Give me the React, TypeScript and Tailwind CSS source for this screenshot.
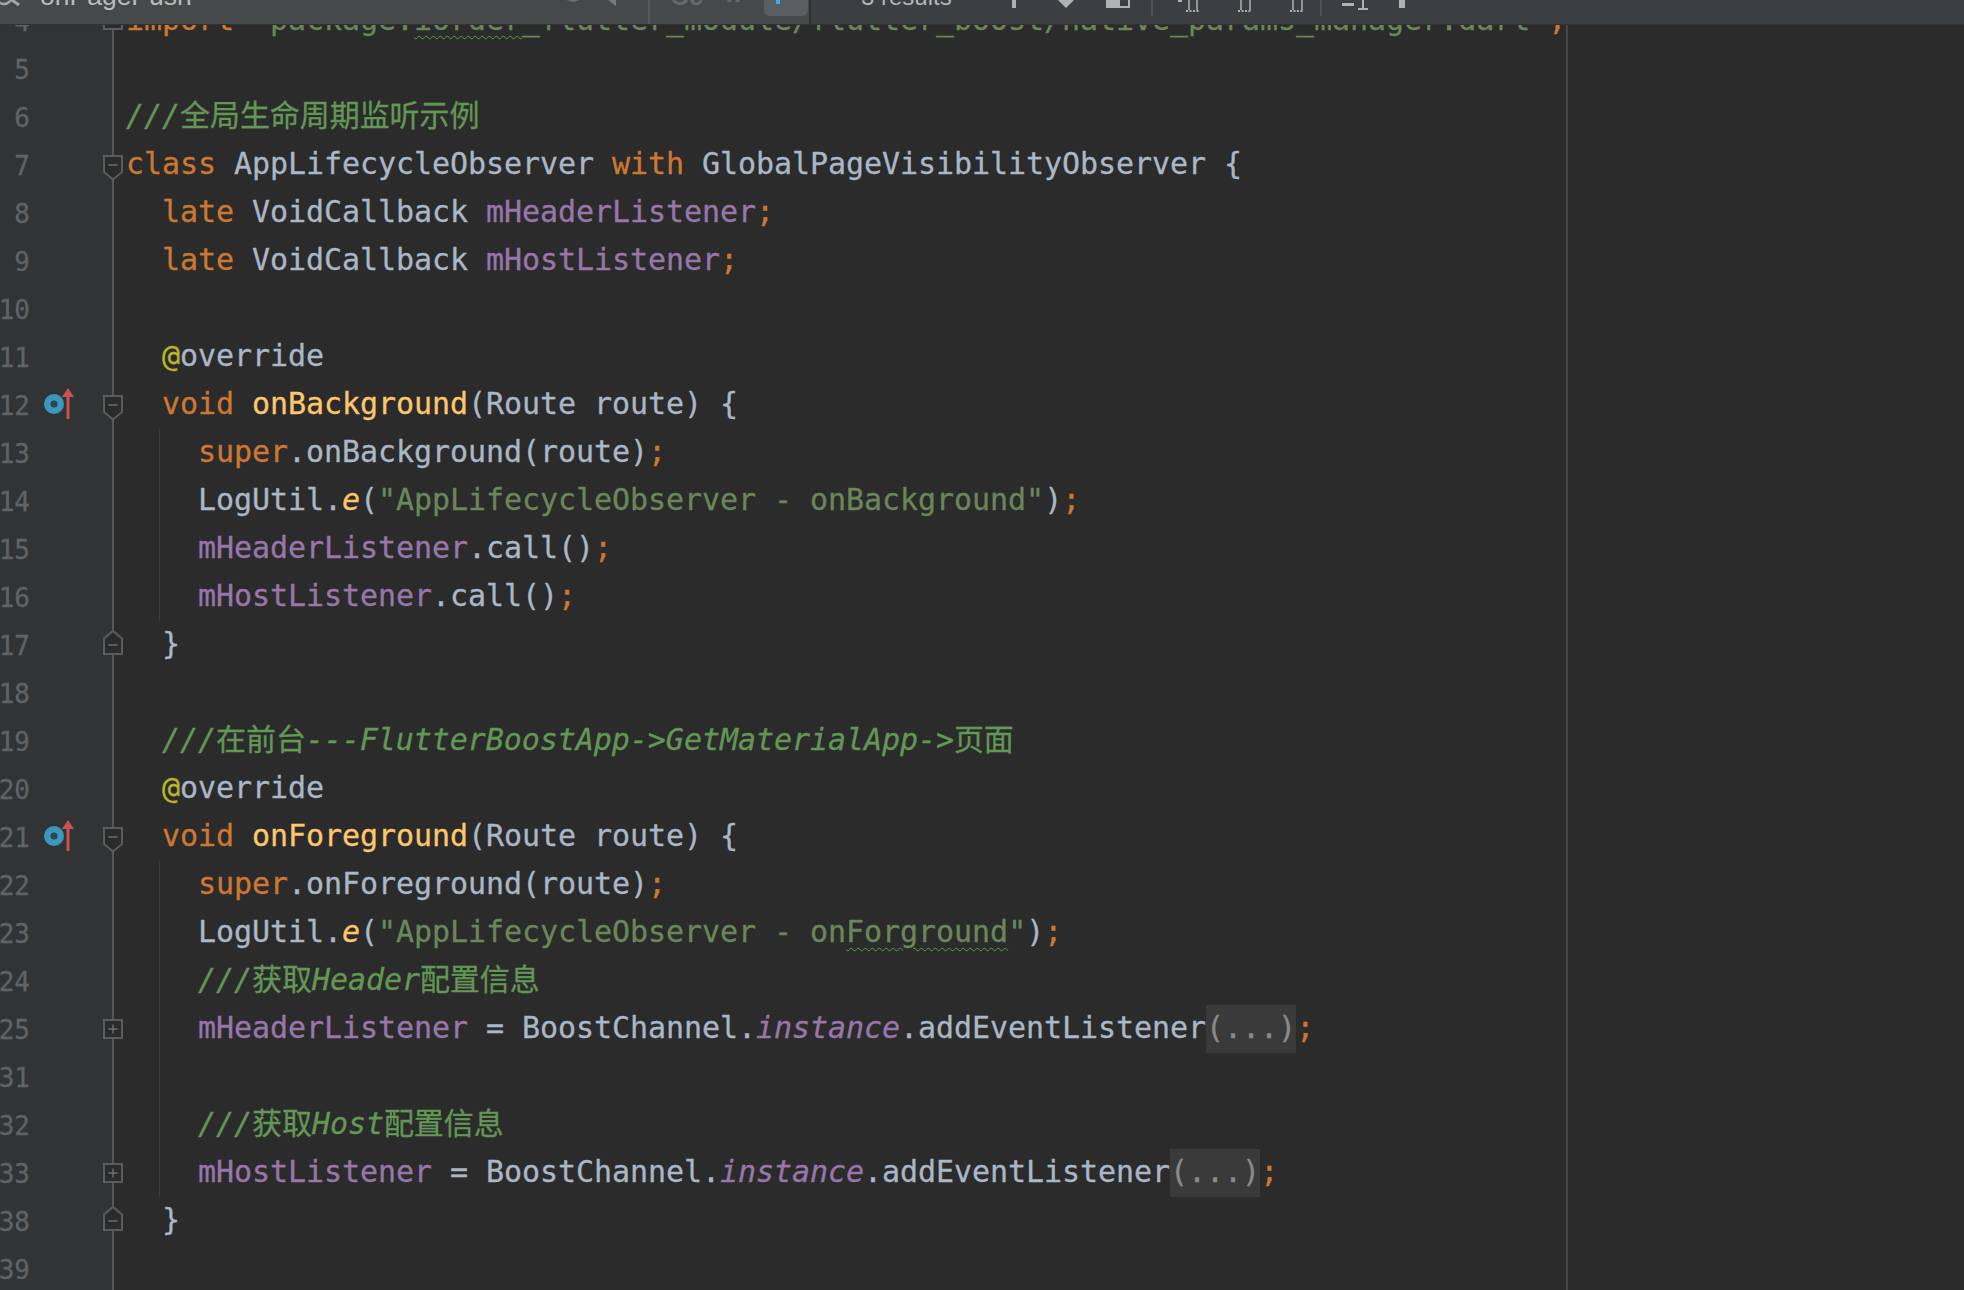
import React from 'react';

type Tok = 'k' | 't' | 'p' | 'pi' | 's' | 'c' | 'ci' | 'm' | 'mi' | 'a' | 'w' | 'f';
type Part = [Tok, string];

interface Line {
  n: number;
  parts?: Part[];
  icon?: boolean;
  fold?: 'open' | 'close' | 'plus' | 'flat';
  guide?: boolean;
}

const tokClass: Record<Tok, string> = {
  k: 'text-[#cc7832]',
  t: 'text-[#a9b7c6]',
  p: 'text-[#9876aa]',
  pi: 'text-[#9876aa] italic',
  s: 'text-[#6a8759]',
  c: 'text-[#629755]',
  ci: 'text-[#629755] italic',
  m: 'text-[#ffc66d]',
  mi: 'text-[#ffc66d] italic',
  a: 'text-[#bbb529]',
  w: 'text-[#6a8759] underline decoration-wavy decoration-[#629755] decoration-1 underline-offset-[5px]',
  f: 'inline-block h-[48px] bg-[#3a3a3a] text-[#8a8a8a]',
};

const lines: Line[] = [
  {
    n: 4,
    fold: 'flat',
    parts: [
      ['k', 'import '],
      ['s', "'package:"],
      ['w', 'iorder'],
      ['s', "_flutter_module/flutter_boost/native_params_manager.dart'"],
      ['k', ';'],
    ],
  },
  { n: 5 },
  { n: 6, parts: [['ci', '///'], ['c', '全局生命周期监听示例']] },
  {
    n: 7,
    fold: 'open',
    parts: [
      ['k', 'class '],
      ['t', 'AppLifecycleObserver '],
      ['k', 'with '],
      ['t', 'GlobalPageVisibilityObserver {'],
    ],
  },
  { n: 8, parts: [['k', '  late '], ['t', 'VoidCallback '], ['p', 'mHeaderListener'], ['k', ';']] },
  { n: 9, parts: [['k', '  late '], ['t', 'VoidCallback '], ['p', 'mHostListener'], ['k', ';']] },
  { n: 10 },
  { n: 11, parts: [['a', '  @'], ['t', 'override']] },
  {
    n: 12,
    icon: true,
    fold: 'open',
    parts: [['k', '  void '], ['m', 'onBackground'], ['t', '(Route route) {']],
  },
  { n: 13, guide: true, parts: [['k', '    super'], ['t', '.onBackground(route)'], ['k', ';']] },
  {
    n: 14,
    guide: true,
    parts: [
      ['t', '    LogUtil.'],
      ['mi', 'e'],
      ['t', '('],
      ['s', '"AppLifecycleObserver - onBackground"'],
      ['t', ')'],
      ['k', ';'],
    ],
  },
  { n: 15, guide: true, parts: [['p', '    mHeaderListener'], ['t', '.call()'], ['k', ';']] },
  { n: 16, guide: true, parts: [['p', '    mHostListener'], ['t', '.call()'], ['k', ';']] },
  { n: 17, fold: 'close', parts: [['t', '  }']] },
  { n: 18 },
  {
    n: 19,
    parts: [['ci', '  ///'], ['c', '在前台'], ['ci', '---FlutterBoostApp->GetMaterialApp->'], ['c', '页面']],
  },
  { n: 20, parts: [['a', '  @'], ['t', 'override']] },
  {
    n: 21,
    icon: true,
    fold: 'open',
    parts: [['k', '  void '], ['m', 'onForeground'], ['t', '(Route route) {']],
  },
  { n: 22, guide: true, parts: [['k', '    super'], ['t', '.onForeground(route)'], ['k', ';']] },
  {
    n: 23,
    guide: true,
    parts: [
      ['t', '    LogUtil.'],
      ['mi', 'e'],
      ['t', '('],
      ['s', '"AppLifecycleObserver - on'],
      ['w', 'Forground'],
      ['s', '"'],
      ['t', ')'],
      ['k', ';'],
    ],
  },
  { n: 24, guide: true, parts: [['ci', '    ///'], ['c', '获取'], ['ci', 'Header'], ['c', '配置信息']] },
  {
    n: 25,
    guide: true,
    fold: 'plus',
    parts: [
      ['p', '    mHeaderListener '],
      ['t', '= BoostChannel.'],
      ['pi', 'instance'],
      ['t', '.addEventListener'],
      ['f', '(...)'],
      ['k', ';'],
    ],
  },
  { n: 31, guide: true },
  { n: 32, guide: true, parts: [['ci', '    ///'], ['c', '获取'], ['ci', 'Host'], ['c', '配置信息']] },
  {
    n: 33,
    guide: true,
    fold: 'plus',
    parts: [
      ['p', '    mHostListener '],
      ['t', '= BoostChannel.'],
      ['pi', 'instance'],
      ['t', '.addEventListener'],
      ['f', '(...)'],
      ['k', ';'],
    ],
  },
  { n: 38, fold: 'close', parts: [['t', '  }']] },
  { n: 39 },
];

const FoldMarker = ({ kind }: { kind: NonNullable<Line['fold']> }) => {
  const stroke = '#5a5c5e';
  if (kind === 'plus' || kind === 'flat') {
    return (
      <svg
        className={`absolute left-[103px] ${kind === 'flat' ? 'top-[13px]' : 'top-[14px]'}`}
        width="20"
        height="20"
        viewBox="0 0 20 20"
      >
        <rect x="1" y="1" width="18" height="18" fill="#2b2b2b" stroke={stroke} strokeWidth="2" />
        <path d={kind === 'plus' ? 'M5.500 10h9M10 5.500v9' : 'M5.500 10h9'} stroke="#6a6c6e" strokeWidth="1.500" />
      </svg>
    );
  }
  if (kind === 'open') {
    return (
      <svg className="absolute left-[103px] top-[14px]" width="20" height="26" viewBox="0 0 20 26">
        <path d="M1 1h18v16l-9 7.500L1 17z" fill="#2b2b2b" stroke={stroke} strokeWidth="2" />
        <path d="M5.500 10h9" stroke="#6a6c6e" strokeWidth="1.500" />
      </svg>
    );
  }
  return (
    <svg className="absolute left-[103px] top-[9px]" width="20" height="25" viewBox="0 0 20 25">
      <path d="M1 24h18V8.500L10 1 1 8.500z" fill="#2b2b2b" stroke={stroke} strokeWidth="2" />
      <path d="M5.500 15h9" stroke="#6a6c6e" strokeWidth="1.500" />
    </svg>
  );
};

const OverrideIcon = () => (
  <svg className="absolute left-[44px] top-[6px]" width="30" height="32" viewBox="0 0 30 32">
    <circle cx="10" cy="17" r="10" fill="#3b97bd" />
    <circle cx="10" cy="17" r="3.600" fill="#2b2b2b" fillOpacity="0.75" />
    <path d="M24 32V8" stroke="#c75450" strokeWidth="3" />
    <path d="M18 10L24 1l6 9z" fill="#c75450" />
  </svg>
);

const Row = ({ line }: { line: Line }) => (
  <div className="relative flex h-[48px] shrink-0">
    <div className="flex w-[114px] shrink-0 border-r-2 border-[#555759] bg-[#313335]">
      <div className="flex w-[30px] justify-end overflow-hidden text-[26px] leading-[50px] text-[#606366] [-webkit-text-stroke:0.3px_#606366]">
        <span className="shrink-0">{line.n}</span>
      </div>
    </div>
    {line.icon && <OverrideIcon />}
    {line.fold && <FoldMarker kind={line.fold} />}
    <div className="relative h-full w-[1454px] shrink-0 border-r-2 border-[#444648] pl-[12px]">
      {line.guide && <div className="absolute left-[45px] top-0 h-full w-px bg-[#3b3b3b]" />}
      <div className="whitespace-pre text-[30px] leading-[46px] tracking-[-0.06px] [-webkit-text-stroke:0.3px]">
        {line.parts?.map(([tok, text], i) => (
          <span key={i} className={tokClass[tok]}>
            {text}
          </span>
        ))}
      </div>
    </div>
  </div>
);

const Toolbar = () => (
  <div className="relative z-10 flex h-[25px] shrink-0 overflow-hidden border-b border-[#323232] bg-[#3c3f41] font-['Liberation_Sans',sans-serif]">
    <div className="flex h-full w-[811px] shrink-0 items-start border-r-2 border-[#323232] bg-[#45494a]">
      <svg width="24" height="24" viewBox="0 0 24 24" className="shrink-0">
        <circle cx="4" cy="-4" r="8" fill="none" stroke="#a4a6a8" strokeWidth="2.500" />
        <path d="M12 0l7 5" stroke="#a4a6a8" strokeWidth="3" />
      </svg>
      <span className="ml-[16px] -mt-[19px] w-[500px] shrink-0 text-[26.500px] leading-[30px] text-[#bbbbbb]">
        onPagePush
      </span>
      <svg width="108" height="24" viewBox="0 0 108 24" className="shrink-0">
        <path d="M26 0l7 2 7-2" fill="#6b6e70" />
        <path d="M68 0l8 6V0z" fill="#77797b" />
      </svg>
      <div className="h-[24px] w-[2px] shrink-0 bg-[#555759]" />
      <span className="ml-[20px] -mt-[19px] w-[54px] shrink-0 text-[26px] font-bold leading-[30px] text-[#66696b]">
        Cc
      </span>
      <span className="-mt-[20px] w-[40px] shrink-0 text-[20px] font-bold leading-[30px] text-[#66696b]">W</span>
      <div className="flex h-[16px] w-[44px] shrink-0 items-start rounded-b-[6px] bg-[#5a5e61] pl-[12px]">
        <div className="h-[4px] w-[4px] bg-[#3daee9]" />
      </div>
    </div>
    <div className="flex h-full flex-1 items-start">
      <span className="ml-[50px] -mt-[18px] w-[110px] shrink-0 text-[24px] leading-[30px] text-[#b4b6b8]">
        3 results
      </span>
      <svg width="500" height="24" viewBox="0 0 500 24" className="shrink-0">
        <g fill="#afb1b3">
          <rect x="41" y="0" width="4" height="8" />
          <path d="M87 0h16l-8 8z" />
          <path d="M135 0h24v8h-24z" />
        </g>
        <rect x="149" y="0" width="8" height="6" fill="#3c3f41" />
        <rect x="180" y="0" width="2" height="16" fill="#4e5052" />
        <g stroke="#afb1b3" strokeWidth="1.500" fill="none">
          <path d="M218 0v10M226 0v10" />
          <path d="M270 0v10M279 0v10" />
          <path d="M322 0v10M331 0v10" />
          <path d="M215 11h14M267 11h14M319 11h14" strokeDasharray="2 1.500" strokeWidth="2" />
        </g>
        <rect x="207" y="0" width="4" height="2" fill="#afb1b3" />
        <rect x="349" y="0" width="2" height="16" fill="#4e5052" />
        <g fill="#afb1b3">
          <rect x="371" y="3" width="12" height="3" />
          <rect x="391" y="0" width="2" height="9" />
          <rect x="387" y="8" width="10" height="2" />
          <rect x="428" y="0" width="6" height="8" />
        </g>
      </svg>
    </div>
  </div>
);

export default function App() {
  return (
    <div className="flex h-[1290px] w-[1964px] flex-col overflow-hidden bg-[#2b2b2b] font-['DejaVu_Sans_Mono','Noto_Sans_CJK_SC',monospace]">
      <Toolbar />
      <div className="-mt-[28px] flex flex-col">
        {lines.map((line) => (
          <Row key={line.n} line={line} />
        ))}
      </div>
    </div>
  );
}
